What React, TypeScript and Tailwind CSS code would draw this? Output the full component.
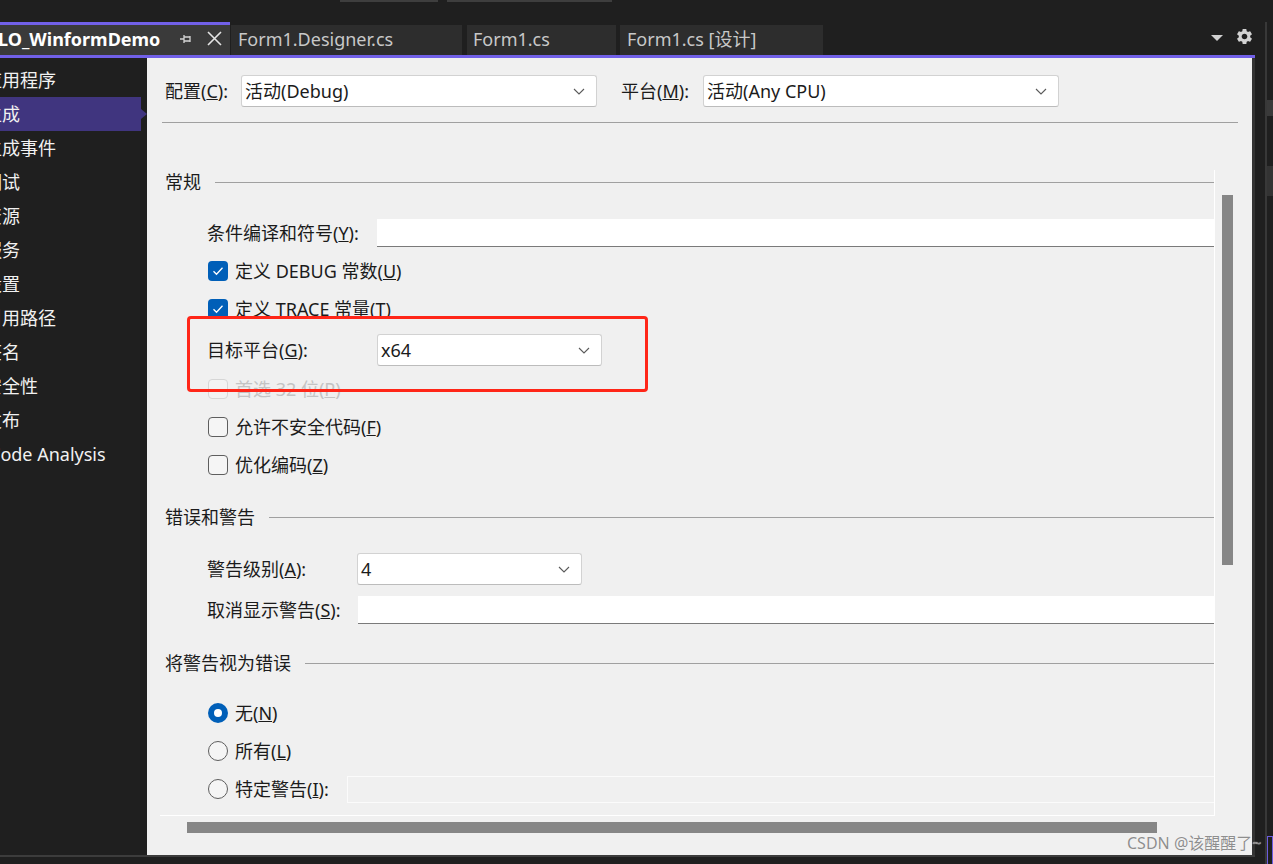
import { MdSettings } from "react-icons/md";

const sidebarItems = [
  "应用程序",
  "生成",
  "生成事件",
  "调试",
  "资源",
  "服务",
  "设置",
  "引用路径",
  "签名",
  "安全性",
  "发布",
  "Code Analysis",
];

function Chevron() {
  return (
    <svg width="12" height="7" viewBox="0 0 12 7" fill="none" stroke="#5a5a5a" strokeWidth="1.1">
      <path d="M1 1l5 5 5-5" />
    </svg>
  );
}

function Select({ value, width }: { value: string; width: string }) {
  return (
    <div
      className={`${width} h-[32px] bg-white border border-[#d2d2d2] border-b-[#bcbcbc] rounded-[3px] flex items-center pl-[3px] pr-[11px]`}
    >
      <span className="flex-1 leading-none whitespace-nowrap">{value}</span>
      <Chevron />
    </div>
  );
}

function Check({ checked, disabled }: { checked?: boolean; disabled?: boolean }) {
  if (checked) {
    return (
      <div className="w-[20px] h-[20px] rounded-[4px] bg-[#005fb8] flex items-center justify-center shrink-0">
        <svg width="12" height="10" viewBox="0 0 12 10" fill="none" stroke="white" strokeWidth="1.3">
          <path d="M1.5 5.2l3 3 6-6.5" />
        </svg>
      </div>
    );
  }
  return (
    <div
      className={`w-[20px] h-[20px] rounded-[4px] border shrink-0 ${
        disabled ? "border-[#d6d6d6] bg-[#f3f3f3]" : "border-[#5e5e5e] bg-[#f5f5f5]"
      }`}
    />
  );
}

function Radio({ checked }: { checked?: boolean }) {
  if (checked) {
    return (
      <div className="w-[20px] h-[20px] rounded-full bg-[#005fb8] flex items-center justify-center shrink-0">
        <div className="w-[8px] h-[8px] rounded-full bg-white" />
      </div>
    );
  }
  return <div className="w-[20px] h-[20px] rounded-full border border-[#5e5e5e] bg-[#f5f5f5] shrink-0" />;
}

function SectionHeader({ label, width, className = "" }: { label: string; width: string; className?: string }) {
  return (
    <div className={`h-[24px] pl-[5px] flex items-center ${className}`}>
      <span className={`${width} leading-none whitespace-nowrap`}>{label}</span>
      <div className="flex-1 h-px bg-[#a0a0a0]" />
    </div>
  );
}

function CheckRow({
  children,
  checked,
  disabled,
}: {
  children: React.ReactNode;
  checked?: boolean;
  disabled?: boolean;
}) {
  return (
    <div className={`h-[38px] shrink-0 flex items-center pl-[48px] gap-[7px] ${disabled ? "text-[#c4c4c4]" : ""}`}>
      <Check checked={checked} disabled={disabled} />
      <span className="leading-none whitespace-nowrap">{children}</span>
    </div>
  );
}

function Tabs() {
  return (
    <div className="h-[33px] flex items-end text-[18px]">
      <div className="w-[230px] h-[33px] bg-[#3a3a3a] border-t-[3px] border-[#7160e8] flex items-center pb-[3px]">
        <span className="ml-[-2px] font-bold text-white leading-none whitespace-nowrap">LO_WinformDemo</span>
        <div className="ml-auto flex items-center">
          <svg width="13" height="10" viewBox="0 0 13 10" fill="none" stroke="#d4d4d4" strokeWidth="1.3">
            <path d="M0 5h4M4 1v8M4 3h6v4H4M10 2v6" />
          </svg>
          <svg className="ml-[14px] mr-[8px]" width="15" height="15" viewBox="0 0 15 15" stroke="#e4e4e4" strokeWidth="1.6">
            <path d="M1 1l13 13M14 1L1 14" />
          </svg>
        </div>
      </div>
      <div className="ml-[1px] w-[231px] h-[30px] bg-[#2d2d2d] flex items-center pl-[7px] pb-[3px] text-[#c8c8c8]">
        <span className="leading-none">Form1.Designer.cs</span>
      </div>
      <div className="ml-[5px] w-[149px] h-[30px] bg-[#2d2d2d] flex items-center pl-[6px] pb-[3px] text-[#c8c8c8]">
        <span className="leading-none">Form1.cs</span>
      </div>
      <div className="ml-[4px] w-[203px] h-[30px] bg-[#2d2d2d] flex items-center pl-[7px] pb-[3px] text-[#c8c8c8]">
        <span className="leading-none">Form1.cs [设计]</span>
      </div>
      <div className="ml-auto h-[33px] flex items-center pb-[2px]">
        <svg width="12" height="6" viewBox="0 0 12 6">
          <polygon points="0,0 12,0 6,6" fill="#d0d0d0" />
        </svg>
        <MdSettings className="ml-[12px] mr-[1px] mb-[3px]" size={19} color="#d2d2d2" />
      </div>
    </div>
  );
}

function Sidebar() {
  return (
    <div className="w-[147px] bg-[#1f1f1f] pt-[5px] text-[18px] text-[#f1f1f1] overflow-hidden">
      {sidebarItems.map((item, i) => (
        <div key={item} className="h-[34px] flex items-center relative">
          {i === 1 && (
            <>
              <div className="absolute left-0 top-0 w-[141px] h-[34px] bg-[#40357f]" />
              <div className="absolute left-[141px] top-[12px] w-0 h-0 border-y-[5px] border-y-transparent border-l-[6px] border-l-[#40357f]" />
            </>
          )}
          <span
            className={`relative leading-none whitespace-nowrap ${
              item === "Code Analysis" ? "ml-[-11px]" : "ml-[-16px]"
            }`}
          >
            {item}
          </span>
        </div>
      ))}
    </div>
  );
}

function Panel() {
  return (
    <div className="flex-1 bg-[#f0f0f0] flex flex-col text-[18px] text-[#1b1b1b] border-r-[3px] border-[#333333]">
      <div className="pt-[17px] pl-[18px]">
        <div className="h-[32px] flex items-center">
          <span className="w-[76px] leading-none whitespace-nowrap">
            配置(<u>C</u>):
          </span>
          <Select value="活动(Debug)" width="w-[356px]" />
          <span className="ml-[24px] w-[82px] leading-none whitespace-nowrap">
            平台(<u>M</u>):
          </span>
          <Select value="活动(Any CPU)" width="w-[356px]" />
        </div>
      </div>
      <div className="mt-[15px] ml-[15px] mr-[14px] h-px bg-[#a0a0a0]" />

      <div className="flex">
        <div className="ml-[13px] w-[1055px] pt-[47px]">
          <div className="h-[646px] border-r border-b border-white overflow-hidden flex flex-col">
            <SectionHeader label="常规" width="w-[50px]" />

            <div className="mt-[25px] h-[28px] shrink-0 flex items-center pl-[47px]">
              <span className="w-[170px] leading-none whitespace-nowrap">
                条件编译和符号(<u>Y</u>):
              </span>
              <div className="flex-1 h-[28px] bg-white border-b border-[#7a7a7a]" />
            </div>

            <div className="mt-[5px]">
              <CheckRow checked>
                定义 DEBUG 常数(<u>U</u>)
              </CheckRow>
            </div>
            <div className="h-[27px] shrink-0 overflow-hidden">
              <CheckRow checked>
                定义 TRACE 常量(<u>T</u>)
              </CheckRow>
            </div>

            <div className="h-[53px] shrink-0 pt-[17px] pl-[47px] bg-[#f0f0f0]">
              <div className="h-[32px] flex items-center">
                <span className="w-[170px] leading-none whitespace-nowrap">
                  目标平台(<u>G</u>):
                </span>
                <Select value="x64" width="w-[225px]" />
              </div>
            </div>

            <CheckRow disabled>
              首选 32 位(<u>P</u>)
            </CheckRow>
            <CheckRow>
              允许不安全代码(<u>F</u>)
            </CheckRow>
            <CheckRow>
              优化编码(<u>Z</u>)
            </CheckRow>

            <SectionHeader label="错误和警告" width="w-[104px]" className="mt-[21px]" />

            <div className="mt-[24px] h-[32px] shrink-0 flex items-center pl-[47px]">
              <span className="w-[150px] leading-none whitespace-nowrap">
                警告级别(<u>A</u>):
              </span>
              <Select value="4" width="w-[225px]" />
            </div>

            <div className="mt-[11px] h-[28px] shrink-0 flex items-center pl-[47px]">
              <span className="w-[151px] leading-none whitespace-nowrap">
                取消显示警告(<u>S</u>):
              </span>
              <div className="flex-1 h-[28px] bg-white border-b border-[#7a7a7a]" />
            </div>

            <SectionHeader label="将警告视为错误" width="w-[140px]" className="mt-[27px]" />

            <div className="mt-[19px] h-[38px] shrink-0 flex items-center pl-[48px] gap-[7px]">
              <Radio checked />
              <span className="leading-none">
                无(<u>N</u>)
              </span>
            </div>
            <div className="h-[38px] shrink-0 flex items-center pl-[48px] gap-[7px]">
              <Radio />
              <span className="leading-none">
                所有(<u>L</u>)
              </span>
            </div>
            <div className="h-[38px] shrink-0 flex items-center pl-[48px] gap-[7px]">
              <Radio />
              <span className="w-[105px] leading-none whitespace-nowrap">
                特定警告(<u>I</u>):
              </span>
              <div className="flex-1 h-[27px] border border-[#fbfbfb] border-r-0" />
            </div>
          </div>
        </div>
        <div className="w-[37px] pt-[72px]">
          <div className="ml-[7px] w-[11px] h-[370px] bg-[#868686]" />
        </div>
      </div>

      <div className="mt-[6px] ml-[40px] w-[970px] h-[11px] bg-[#868686]" />
    </div>
  );
}

export default function App() {
  return (
    <div className="w-[1273px] h-[864px] bg-[#1f1f1f] overflow-hidden relative flex flex-col font-['Noto_Sans','Noto_Sans_CJK_SC',sans-serif]">
      <div className="h-[22px] shrink-0 flex">
        <div className="ml-[340px] w-[98px] h-[2px] bg-[#3e3e3e]" />
        <div className="ml-[9px] w-[165px] h-[2px] bg-[#3e3e3e]" />
      </div>

      <div className="flex flex-1">
        <div className="w-[1255px] flex flex-col">
          <Tabs />
          <div className="h-[3px] bg-[#7160e8]" />
          <div className="h-[797px] flex">
            <Sidebar />
            <Panel />
          </div>
          <div className="flex-1 border-t-2 border-[#3c3c3c]" />
        </div>
        <div className="w-[18px] flex">
          <div className="ml-[10px] w-[2px] bg-[#383838]" />
          <div className="flex-1 flex flex-col pt-[78px]">
            <div className="h-[16px] bg-[#3a3a3a]" />
            <div className="mt-[50px] h-[30px] bg-[#333333]" />
            <div className="mt-[640px] h-[30px] border border-[#6c5ce0]" />
          </div>
        </div>
      </div>

      <div className="absolute left-[187px] top-[316px] w-[461px] h-[76px] border-[3px] border-[#ff2618] rounded-[4px]" />

      <div className="absolute left-[1127px] top-[835px] text-[16px] leading-none text-[#8e8e8e] whitespace-nowrap [text-shadow:0_0_1px_#ffffff]">
        CSDN @该醒醒了~
      </div>
    </div>
  );
}
